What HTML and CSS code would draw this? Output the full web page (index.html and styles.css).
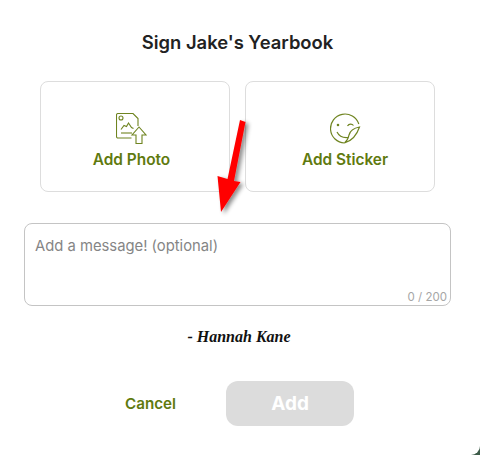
FILE: index.html
```html
<!DOCTYPE html>
<html lang="en">
<head>
  <meta charset="UTF-8" />
  <meta name="viewport" content="width=device-width, initial-scale=1.0"/>
  <title>Sign Jake's Yearbook</title>
  <link rel="stylesheet" href="styles.css">
</head>
<body>
  <div class="modal">
    <h1 class="title">Sign Jake's Yearbook</h1>

    <div class="tiles">
      <button class="tile tile-photo">
        <svg class="tile-icon" width="31" height="31" viewBox="0 0 31 31" fill="none" stroke="#6f8420" stroke-width="1.1">
          <path d="M15.500 25H2a1.500 1.500 0 0 1-1.500-1.500V2A1.500 1.500 0 0 1 2 .5h15l5 5V13"/>
          <circle cx="5" cy="5" r="2"/>
          <path d="M5 16.500l3-4 2.500 1 2-3.500 3 4.500 2 1"/>
          <path d="M5 20h11"/>
          <path d="M23 14l-7 8h4v8.500h6V22h4z"/>
        </svg>
        <span>Add Photo</span>
      </button>
      <button class="tile tile-sticker">
        <svg class="tile-icon" width="31" height="31" viewBox="0 0 31 31" fill="none" stroke="#6f8420" stroke-width="1.2">
          <path d="M14.500 30A14.500 14.500 0 1 1 28.800 11"/>
          <path d="M29.500 14C24 15 20 18 19 22c-.6 3-2 6-4.500 8 7-2 12.500-8.500 15-16z"/>
          <path d="M7 19c2 4 6 6 11 5.500"/>
          <path d="M17.500 13c1.500-2.500 4.500-2.500 6-.5"/>
          <circle cx="8" cy="12" r=".7" fill="#6f8420"/>
        </svg>
        <span>Add Sticker</span>
      </button>
    </div>

    <div class="message-box">
      <span class="placeholder">Add a message! (optional)</span>
      <span class="counter">0 / 200</span>
    </div>

    <p class="signature">- Hannah Kane</p>

    <div class="actions">
      <button class="btn-cancel">Cancel</button>
      <button class="btn-add">Add</button>
    </div>
  </div>

  <!-- flecha roja encima -->
  <svg class="arrow" width="60" height="110" viewBox="0 0 60 110">
    <defs>
      <filter id="arrow-shadow" x="-30%" y="-10%" width="170%" height="130%">
        <feDropShadow dx="3" dy="2" stdDeviation="2" flood-color="#000" flood-opacity="0.45"/>
      </filter>
    </defs>
    <path d="M30 10 L35.500 12 L24 71 L30.500 72 L11 102 L7.500 66 L17.500 69 Z" fill="#ff0000" filter="url(#arrow-shadow)"/>
  </svg>
</body>
</html>
```

FILE: styles.css
```css
* {
  box-sizing: border-box;
}
body {
  margin: 0;
  height: 455px;
  overflow: hidden;
  background: #3d5c4a;
  font-family: 'Inter', sans-serif;
  position: relative;
}
.modal {
  height: 455px;
  display: flex;
  flex-direction: column;
  align-items: center;
  padding: 30px 29px 0 24px;
  background: #fff;
  border-bottom-right-radius: 9px;
}
.title {
  margin: 0 0 27px;
  font-size: 18.400px;
  line-height: 24px;
  font-weight: 600;
  color: #222;
}
.tiles {
  display: flex;
  gap: 15px;
  margin-bottom: 31px;
}
.tile {
  width: 190px;
  height: 111px;
  padding: 31px 0 0;
  display: flex;
  flex-direction: column;
  align-items: center;
  background: #fff;
  border: 1px solid #ddd;
  border-radius: 8px;
  font-family: inherit;
  font-size: 15.400px;
  line-height: 20px;
  font-weight: 600;
  color: #5f7a0f;
}
.tile-photo {
  padding-right: 7px;
}
.tile-sticker {
  padding-left: 10px;
}
.tile-icon {
  margin-bottom: 6px;
}
.message-box {
  width: 427px;
  height: 83px;
  padding: 12px 10px;
  position: relative;
  border: 1px solid #c4c4c4;
  border-radius: 8px;
}
.placeholder {
  display: block;
  font-size: 14.800px;
  line-height: 20px;
  color: #858585;
}
.counter {
  position: absolute;
  right: 3px;
  bottom: 1px;
  font-size: 11.500px;
  line-height: 14px;
  color: #a6a6a6;
}
.signature {
  margin: 20px 0 0 3px;
  font-family: 'Liberation Serif', serif;
  font-style: italic;
  font-weight: 700;
  font-size: 16px;
  line-height: 22px;
  color: #111;
}
.actions {
  align-self: stretch;
  display: flex;
  align-items: center;
  gap: 50px;
  margin-top: 33px;
  padding-left: 101px;
}
.btn-cancel {
  padding: 0;
  background: none;
  border: none;
  font-family: inherit;
  font-size: 15.200px;
  font-weight: 600;
  color: #5f7a0f;
}
.btn-add {
  width: 128px;
  height: 45px;
  background: #dcdcdc;
  border: none;
  border-radius: 12px;
  font-family: inherit;
  font-size: 19px;
  font-weight: 700;
  color: #fff;
}
.arrow {
  position: absolute;
  left: 210px;
  top: 110px;
}
```
